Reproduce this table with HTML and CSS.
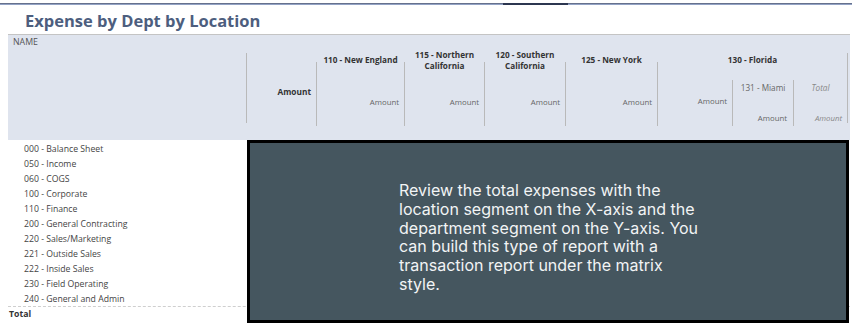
FILE: index.html
```html
<!DOCTYPE html>
<html lang="en">
<head>
<meta charset="utf-8">
<title>Expense by Dept by Location</title>
<link rel="stylesheet" href="styles.css">
</head>
<body>
<div class="topbar"><span class="topbar-tab"></span></div>
<div class="report">
  <h1 class="report-title">Expense by Dept by Location</h1>
  <div class="matrix-head">
    <div class="head-name">NAME</div>
    <div class="head-total"><div class="amt-strong">Amount</div></div>
    <div class="head-col w88"><div class="col-title">110 - New England</div><div class="col-amt">Amount</div></div>
    <div class="head-col w80"><div class="col-title">115 - Northern<br>California</div><div class="col-amt">Amount</div></div>
    <div class="head-col w81"><div class="col-title">120 - Southern<br>California</div><div class="col-amt">Amount</div></div>
    <div class="head-col w92"><div class="col-title">125 - New York</div><div class="col-amt">Amount</div></div>
    <div class="head-group">
      <div class="col-title">130 - Florida</div>
      <div class="group-sub">
        <div class="sub-own"><div class="col-amt">Amount</div></div>
        <div class="sub-col w61"><div class="sub-title">131 - Miami</div><div class="sub-amt">Amount</div></div>
        <div class="sub-col w54 sub-total"><div class="sub-title">Total</div><div class="sub-amt">Amount</div></div>
      </div>
    </div>
    <div class="head-end"></div>
  </div>
  <ul class="rows">
    <li>000 - Balance Sheet</li>
    <li>050 - Income</li>
    <li>060 - COGS</li>
    <li>100 - Corporate</li>
    <li>110 - Finance</li>
    <li>200 - General Contracting</li>
    <li>220 - Sales/Marketing</li>
    <li>221 - Outside Sales</li>
    <li>222 - Inside Sales</li>
    <li>230 - Field Operating</li>
    <li>240 - General and Admin</li>
  </ul>
  <div class="total-row">Total</div>
</div>
<div class="callout">
  <p class="callout-text">Review the total expenses with the location segment on the X-axis and the department segment on the Y-axis. You can build this type of report with a transaction report under the matrix style.</p>
</div>
</body>
</html>
```
FILE: styles.css
```css
* { box-sizing: border-box; }
html, body { margin: 0; padding: 0; background: #fff; }
body {
  font-family: "Open Sans", "Liberation Sans", sans-serif;
  color: #333;
  width: 856px;
  height: 323px;
  overflow: hidden;
  position: relative;
}
.topbar {
  margin-top: 3px;
  width: 852px;
  height: 2px;
  border-top: 1px solid #66718d;
  background: #93a3c5;
  display: flex;
}
.topbar-tab {
  margin-left: 503px;
  margin-top: -1px;
  width: 65px;
  height: 2px;
  background: #2c3650;
}
.report {
  margin-left: 8px;
  width: 842px;
}
.report-title {
  margin: 0;
  padding: 2px 0 0 17px;
  height: 30px;
  line-height: 27px;
  font-size: 16.5px;
  font-weight: 700;
  color: #4d5e7e;
  border-bottom: 1px solid #c4c4c4;
}
.matrix-head {
  display: flex;
  height: 105px;
  background: #dfe4ee;
  font-size: 7.8px;
}
.head-name {
  width: 238px;
  flex: none;
  padding: 2px 5px;
  line-height: 11px;
  font-size: 8.8px;
  color: #555;
}
.head-total {
  width: 70px;
  flex: none;
  margin-top: 18px;
  height: 70px;
  border-left: 1px solid #b9b9b9;
  padding: 33px 5px 0 0;
  text-align: right;
}
.amt-strong {
  font-weight: 700;
  font-size: 8.3px;
  line-height: 12px;
  color: #333;
}
.head-col, .head-group {
  flex: none;
  margin-top: 27px;
  height: 64px;
  border-left: 1px solid #b9b9b9;
  display: flex;
  flex-direction: column;
}
.w88 { width: 88px; }
.w80 { width: 80px; }
.w81 { width: 81px; }
.w92 { width: 92px; }
.w61 { width: 61px; }
.w54 { width: 54px; }
.head-group { width: 190px; }
.col-title {
  margin-top: -13px;
  height: 22px;
  display: flex;
  align-items: center;
  justify-content: center;
  text-align: center;
  font-weight: 700;
  font-size: 8.2px;
  line-height: 11.5px;
  color: #333;
}
.col-amt {
  margin-top: 26px;
  padding-right: 5px;
  text-align: right;
  line-height: 11px;
  color: #666;
}
.group-sub {
  display: flex;
  margin-top: 10px;
  height: 47px;
}
.sub-own {
  width: 74px;
  flex: none;
}
.sub-own .col-amt { margin-top: 16px; }
.sub-col {
  flex: none;
  border-left: 1px solid #b9b9b9;
  display: flex;
  flex-direction: column;
  justify-content: space-between;
  padding: 2px 0 2px 0;
  line-height: 11px;
  font-size: 8.2px;
  color: #666;
}
.sub-title { text-align: center; }
.sub-amt { text-align: right; padding-right: 5px; font-size: 7.8px; }
.sub-col.w61 .sub-amt { padding-right: 6px; }
.sub-total { font-style: italic; color: #888; }
.head-end {
  flex: none;
  width: 3px;
  margin-top: 18px;
  height: 70px;
  border-left: 1px solid #b9b9b9;
}
.rows {
  list-style: none;
  margin: 0;
  padding: 2px 0 0 0;
  font-size: 8.7px;
  color: #444;
}
.rows li {
  padding-left: 16px;
  height: 15px;
  line-height: 15px;
}
.rows li:last-child {
  border-bottom: 1px dashed #cfcfcf;
}
.total-row {
  padding-left: 1px;
  height: 14px;
  line-height: 14px;
  font-size: 8.7px;
  font-weight: 700;
  color: #333;
}
.callout {
  position: absolute;
  left: 247px;
  top: 140px;
  width: 602px;
  height: 183px;
  border: 3px solid #000;
  background: #45565f;
  padding: 38px 0 0 149px;
}
.callout-text {
  margin: 0;
  width: 308px;
  font-family: "Inter", "Roboto", sans-serif;
  font-size: 16px;
  line-height: 18.75px;
  color: #f2f4f5;
}
```
